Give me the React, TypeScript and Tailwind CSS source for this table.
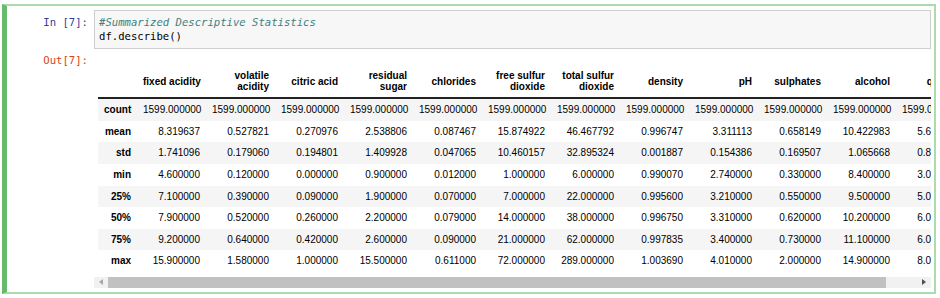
const headers: string[][] = [
  ["fixed acidity"],
  ["volatile", "acidity"],
  ["citric acid"],
  ["residual", "sugar"],
  ["chlorides"],
  ["free sulfur", "dioxide"],
  ["total sulfur", "dioxide"],
  ["density"],
  ["pH"],
  ["sulphates"],
  ["alcohol"],
  ["quality"],
];

const rows: [string, string[]][] = [
  ["count", Array(12).fill("1599.000000")],
  ["mean", ["8.319637", "0.527821", "0.270976", "2.538806", "0.087467", "15.874922", "46.467792", "0.996747", "3.311113", "0.658149", "10.422983", "5.636023"]],
  ["std", ["1.741096", "0.179060", "0.194801", "1.409928", "0.047065", "10.460157", "32.895324", "0.001887", "0.154386", "0.169507", "1.065668", "0.807569"]],
  ["min", ["4.600000", "0.120000", "0.000000", "0.900000", "0.012000", "1.000000", "6.000000", "0.990070", "2.740000", "0.330000", "8.400000", "3.000000"]],
  ["25%", ["7.100000", "0.390000", "0.090000", "1.900000", "0.070000", "7.000000", "22.000000", "0.995600", "3.210000", "0.550000", "9.500000", "5.000000"]],
  ["50%", ["7.900000", "0.520000", "0.260000", "2.200000", "0.079000", "14.000000", "38.000000", "0.996750", "3.310000", "0.620000", "10.200000", "6.000000"]],
  ["75%", ["9.200000", "0.640000", "0.420000", "2.600000", "0.090000", "21.000000", "62.000000", "0.997835", "3.400000", "0.730000", "11.100000", "6.000000"]],
  ["max", ["15.900000", "1.580000", "1.000000", "15.500000", "0.611000", "72.000000", "289.000000", "1.003690", "4.010000", "2.000000", "14.900000", "8.000000"]],
];

const mono = "font-['DejaVu_Sans_Mono',monospace] text-[10.6px] leading-[13.6px]";

function DescribeTable() {
  return (
    <table className="ml-[4px] w-[867px] table-fixed border-collapse font-['Liberation_Sans',Arial,sans-serif] text-[10px] text-black whitespace-nowrap">
      <thead>
        <tr>
          <th className="w-[39px] border-b-2 border-[#222]"></th>
          {headers.map((h, i) => (
            <th key={i} className="w-[69px] border-b-2 border-[#222] px-[6px] py-[5px] text-right align-middle font-bold leading-[11px]">
              {h.map((line, j) => (
                <div key={j}>{line}</div>
              ))}
            </th>
          ))}
        </tr>
      </thead>
      <tbody>
        {rows.map(([label, vals], i) => (
          <tr key={label} className={i % 2 === 0 ? "bg-[#f5f5f5]" : "bg-white"}>
            <th className="px-[6px] py-[5px] text-right font-bold leading-[11.6px]">{label}</th>
            {vals.map((v, j) => (
              <td key={j} className="px-[6px] py-[5px] text-right leading-[11.6px]">{v}</td>
            ))}
          </tr>
        ))}
      </tbody>
    </table>
  );
}

function ScrollBar() {
  return (
    <div className="mt-[5px] flex h-[11px] w-[837px] bg-[#f1f1f1]">
      <div className="flex w-[14px] items-center justify-center">
        <svg width="4" height="6" viewBox="0 0 4 6"><path d="M4 0 L0 3 L4 6 Z" fill="#a8a8a8" /></svg>
      </div>
      <div className="w-[778px] bg-[#c1c1c1]" />
      <div className="flex-1" />
      <div className="flex w-[14px] items-center justify-center">
        <svg width="4" height="6" viewBox="0 0 4 6"><path d="M0 0 L4 3 L0 6 Z" fill="#505050" /></svg>
      </div>
    </div>
  );
}

export default function App() {
  return (
    <div className="h-[298px] w-[940px] bg-white pl-[2px] pt-[4px]">
      <div className="h-[290px] w-[934px] border-2 border-l-[5px] border-[#acdcae] border-l-[#66bb6a] bg-white">
        <div className="mt-[4px] flex">
          <div className={`w-[87px] shrink-0 pr-[6px] pt-[6px] text-right text-[#303f9f] ${mono}`}>In [7]:</div>
          <div className={`w-[837px] border border-[#cfcfcf] bg-[#f7f7f7] px-[4px] py-[5px] text-black ${mono}`}>
            <div className="italic text-[#408080]">#Summarized Descriptive Statistics</div>
            <div>df.describe()</div>
          </div>
        </div>
        <div className="mt-[5px] flex">
          <div className={`w-[87px] shrink-0 pr-[6px] text-right text-[#d84315] ${mono}`}>Out[7]:</div>
          <div className="w-[837px]">
            <div className="mt-[11px] w-[837px] overflow-hidden">
              <DescribeTable />
            </div>
            <ScrollBar />
          </div>
        </div>
      </div>
    </div>
  );
}
